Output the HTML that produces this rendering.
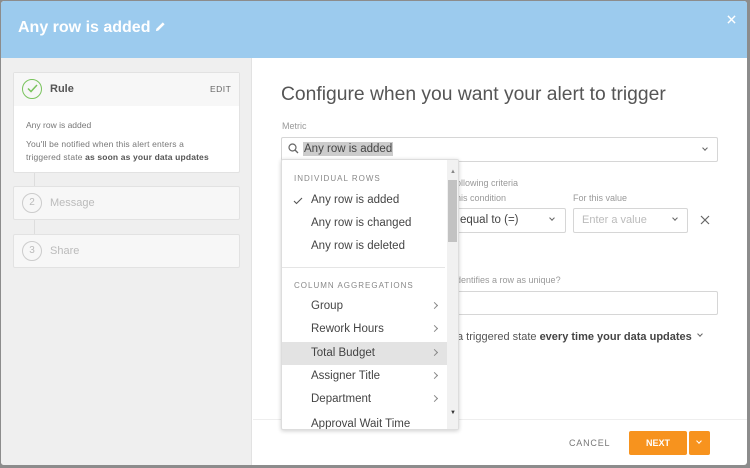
<!DOCTYPE html>
<html><head><style>
*{box-sizing:border-box;margin:0;padding:0}
body{width:750px;height:468px;background:#8c8c8c;font-family:"Liberation Sans",sans-serif;position:relative;overflow:hidden;color:#555}
.modal{position:absolute;left:1px;top:1px;width:746px;height:464px;background:#fff;border-radius:3px;overflow:hidden}
.hdr{position:absolute;left:0;top:0;width:746px;height:57px;background:#9ccbee}
.hdr h1{position:absolute;left:17px;top:18px;font-size:16px;font-weight:bold;color:#fff}
.left{position:absolute;left:0;top:57px;width:251px;height:407px;background:#efefef;border-right:1px solid #e2e2e2}
.card{position:absolute;left:12px;width:227px;border:1px solid #e2e2e2;background:#f7f7f7;border-radius:2px}
.circ{position:absolute;left:8px;width:20px;height:20px;border-radius:50%;border:1.5px solid #ccc;font-size:10px;color:#bbb;text-align:center;line-height:18px}
.abs{position:absolute}
.lbl{font-size:9px;color:#999}
.box{position:absolute;border:1px solid #d6d6d6;border-radius:2px;background:#fff}
.chev{position:absolute;width:5px;height:5px;border-right:1.3px solid #666;border-bottom:1.3px solid #666;transform:rotate(45deg)}
.rchev{position:absolute;width:5px;height:5px;border-right:1.2px solid #888;border-bottom:1.2px solid #888;transform:rotate(-45deg)}
.dd{position:absolute;left:280px;top:158px;width:178px;height:271px;background:#fff;border:1px solid #ddd;box-shadow:0 1px 4px rgba(0,0,0,.2);border-radius:2px;overflow:hidden}
.it{position:absolute;left:0;width:165px;height:23px;font-size:11.5px;color:#444;padding-left:29px;line-height:23px}
.sec{position:absolute;left:12px;font-size:8px;letter-spacing:1px;color:#888}
</style></head><body>
<div class="modal">
<div class="hdr"><h1>Any row is added <svg width="11" height="11" viewBox="0 0 12 12" style="vertical-align:0"><path d="M1 11 L1.5 8.5 L8.5 1.5 L10.5 3.5 L3.5 10.5 Z" fill="#fff"/></svg></h1>
<svg class="abs" style="left:726px;top:14px" width="9" height="9" viewBox="0 0 10 10"><path d="M1 1L9 9M9 1L1 9" stroke="#fff" stroke-width="1.6"/></svg></div>
<div class="left">
<div class="abs" style="left:33px;top:115px;width:1px;height:65px;background:#ddd"></div>
<div class="card" style="top:14px;height:101px;background:#fff">
<div style="height:33px;background:#f7f7f7;position:relative">
<div class="circ" style="top:6px;border-color:#79c35d"><svg width="11" height="9" viewBox="0 0 11 9" style="margin-top:4px"><path d="M1 4.5L4 7.5L10 1" stroke="#79c35d" stroke-width="1.5" fill="none"/></svg></div>
<div class="abs" style="left:36px;top:10px;font-size:11px;font-weight:bold;color:#555">Rule</div>
<div class="abs" style="left:196px;top:11px;font-size:8.5px;letter-spacing:.5px;color:#666">EDIT</div></div>
<div class="abs" style="left:12px;top:47px;font-size:8.5px;color:#777">Any row is added</div>
<div class="abs" style="left:12px;top:65px;font-size:8.5px;color:#777;line-height:13px;width:185px;letter-spacing:.15px">You'll be notified when this alert enters a triggered state <b style="color:#555">as soon as your data updates</b></div>
</div>
<div class="card" style="top:128px;height:34px"><div class="circ" style="top:6px">2</div><div class="abs" style="left:36px;top:10px;font-size:11px;color:#bbb">Message</div></div>
<div class="card" style="top:176px;height:34px"><div class="circ" style="top:6px">3</div><div class="abs" style="left:36px;top:10px;font-size:11px;color:#bbb">Share</div></div>
</div>
<div class="abs" style="left:280px;top:83px;font-size:19.3px;color:#555">Configure when you want your alert to trigger</div>
<div class="abs lbl" style="left:281px;top:120px">Metric</div>
<div class="box" style="left:280px;top:136px;width:437px;height:25px"></div>
<svg class="abs" style="left:287px;top:142px" width="11" height="11" viewBox="0 0 11 11"><circle cx="4.5" cy="4.5" r="3.5" stroke="#666" fill="none" stroke-width="1.2"/><path d="M7 7L10 10" stroke="#666" stroke-width="1.3"/></svg>
<div class="abs" style="left:302px;top:141px;height:14px;background:#ccc;font-size:11.5px;color:#444;padding:0 1px;line-height:14px">Any row is added</div>
<div class="chev" style="left:702px;top:145px;width:4px;height:4px"></div>
<div class="abs lbl" style="left:455px;top:177px">ollowing criteria</div>
<div class="abs lbl" style="left:455px;top:192px">his condition</div>
<div class="abs lbl" style="left:572px;top:192px">For this value</div>
<div class="box" style="left:440px;top:207px;width:125px;height:25px"></div>
<div class="abs" style="left:459px;top:213px;font-size:11.5px;color:#444">equal to (=)</div>
<div class="chev" style="left:549px;top:215px;width:4px;height:4px"></div>
<div class="box" style="left:572px;top:207px;width:115px;height:25px"></div>
<div class="abs" style="left:581px;top:213px;font-size:11px;color:#bbb">Enter a value</div>
<div class="chev" style="left:672px;top:215px;width:4px;height:4px"></div>
<svg class="abs" style="left:699px;top:214px" width="10" height="10" viewBox="0 0 10 10"><path d="M1 1L9 9M9 1L1 9" stroke="#666" stroke-width="1.2"/></svg>
<div class="abs lbl" style="left:455px;top:274px">dentifies a row as unique?</div>
<div class="box" style="left:440px;top:290px;width:277px;height:24px"></div>
<div class="abs" style="left:456px;top:330px;font-size:11px;color:#555">a triggered state <b style="color:#444">every time your data updates</b></div>
<div class="chev" style="left:697px;top:331px;width:4px;height:4px"></div>
<div class="abs" style="left:252px;top:418px;width:494px;height:1px;background:#eee"></div>
<div class="abs" style="left:568px;top:437px;font-size:9px;letter-spacing:.8px;color:#777">CANCEL</div>
<div class="abs" style="left:628px;top:430px;width:58px;height:24px;background:#f7931e;border-radius:2px;color:#fff;font-size:9px;font-weight:bold;text-align:center;line-height:24px">NEXT</div>
<div class="abs" style="left:688px;top:430px;width:21px;height:24px;background:#f7931e;border-radius:2px"><div class="chev" style="left:8px;top:8px;width:4px;height:4px;border-color:#fff"></div></div>
<div class="dd">
<div class="sec" style="top:14px">INDIVIDUAL ROWS</div>
<svg class="abs" style="left:11px;top:37px" width="10" height="8" viewBox="0 0 10 8"><path d="M1 4L3.5 6.5L9 1" stroke="#555" stroke-width="1.1" fill="none"/></svg>
<div class="it" style="top:29px">Any row is added</div>
<div class="it" style="top:52px">Any row is changed</div>
<div class="it" style="top:75px">Any row is deleted</div>
<div class="abs" style="left:0;top:107px;width:163px;height:1px;background:#e5e5e5"></div>
<div class="sec" style="top:121px">COLUMN AGGREGATIONS</div>
<div class="it" style="top:135px">Group</div>
<div class="it" style="top:158px">Rework Hours</div>
<div class="it" style="top:182px;background:#e3e3e3">Total Budget</div>
<div class="it" style="top:205px">Assigner Title</div>
<div class="it" style="top:228px">Department</div>
<div class="it" style="top:253px">Approval Wait Time</div>
<div class="rchev" style="left:150px;top:143px"></div><div class="rchev" style="left:150px;top:166px"></div><div class="rchev" style="left:150px;top:190px"></div><div class="rchev" style="left:150px;top:213px"></div><div class="rchev" style="left:150px;top:236px"></div>
<div class="abs" style="left:165px;top:0;width:12px;height:271px;background:#f1f1f1"></div>
<div class="abs" style="left:166px;top:20px;width:9px;height:62px;background:#c2c2c2"></div>
<div class="abs" style="left:168px;top:9px;font-size:6px;color:#888">▲</div>
<div class="abs" style="left:168px;top:250px;font-size:6px;color:#333">▼</div>
</div>
</div>
</body></html>
